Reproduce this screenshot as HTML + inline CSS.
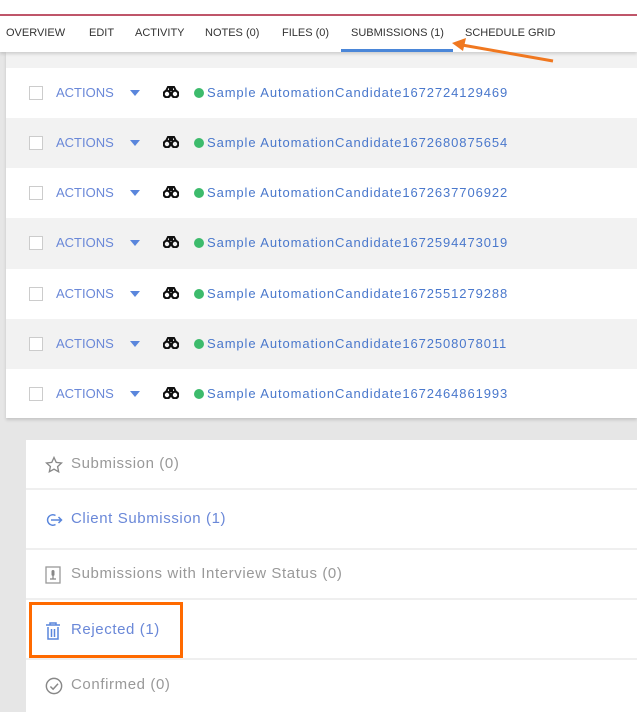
<!DOCTYPE html>
<html><head><style>
*{margin:0;padding:0;box-sizing:border-box}
body{width:637px;height:712px;overflow:hidden;background:#e6e6e6;font-family:"Liberation Sans",sans-serif;position:relative}
.top{position:absolute;left:0;top:0;width:637px;height:16px;background:#fff;border-bottom:2px solid #c0566a}
.tabs{position:absolute;left:0;top:16px;width:637px;height:36px;background:#fff;box-shadow:0 2px 3px rgba(0,0,0,.15);z-index:2}
.tab{position:absolute;top:11px;font-size:11px;color:#333;white-space:nowrap}
.ul{position:absolute;left:341px;top:33px;width:112px;height:3px;background:#4a86d8}
.panel{position:absolute;left:6px;top:52px;width:631px;height:366px;background:#f2f2f2;box-shadow:0 2px 3px rgba(0,0,0,.15)}
.row{position:absolute;left:6px;width:631px;height:50px}
.cb{position:absolute;left:23px;top:18px;width:14px;height:14px;border:1px solid #ccc;background:#fff}
.act{position:absolute;left:50px;top:17px;font-size:13px;color:#6a88d8}
.tri{position:absolute;left:124px;top:22px;width:0;height:0;border-left:5px solid transparent;border-right:5px solid transparent;border-top:6px solid #5a86dc}
.bin{position:absolute;left:157px;top:18px}
.dot{position:absolute;left:188px;top:20px;width:10px;height:10px;border-radius:50%;background:#3dbb6c}
.nm{position:absolute;left:201px;top:17px;font-size:13px;letter-spacing:0.9px;color:#4a78cc;white-space:nowrap}
.p2{position:absolute;left:26px;top:440px;width:611px;height:272px;background:#fff}
.it{position:absolute;left:0;width:611px;border-bottom:2px solid #efefef}
.it span{position:absolute;left:45px;font-size:15px;letter-spacing:0.6px;color:#999;white-space:nowrap}
.it svg{position:absolute;left:19px}
</style></head><body>
<div class="top"></div>
<div class="tabs">
<span class="tab" style="left:6px">OVERVIEW</span>
<span class="tab" style="left:89px">EDIT</span>
<span class="tab" style="left:135px">ACTIVITY</span>
<span class="tab" style="left:205px">NOTES (0)</span>
<span class="tab" style="left:282px">FILES (0)</span>
<span class="tab" style="left:351px">SUBMISSIONS (1)</span>
<span class="tab" style="left:465px">SCHEDULE GRID</span>
<div class="ul"></div>
</div>
<div class="panel"></div>
<div class="row" style="top:68px;background:#fff"><div class="cb"></div><span class="act">ACTIONS</span><div class="tri"></div><svg class="bin" width="16" height="12" viewBox="0 0 16 12"><circle cx="4" cy="8" r="3.3" fill="none" stroke="#111" stroke-width="2.2"/><circle cx="12" cy="8" r="3.3" fill="none" stroke="#111" stroke-width="2.2"/><path d="M3 5 L5 1 H7 V5 M13 5 L11 1 H9 V5 M6 4 H10" stroke="#111" stroke-width="2" fill="none"/></svg><div class="dot"></div><span class="nm">Sample AutomationCandidate1672724129469</span></div>
<div class="row" style="top:118px;background:#f2f2f2"><div class="cb"></div><span class="act">ACTIONS</span><div class="tri"></div><svg class="bin" width="16" height="12" viewBox="0 0 16 12"><circle cx="4" cy="8" r="3.3" fill="none" stroke="#111" stroke-width="2.2"/><circle cx="12" cy="8" r="3.3" fill="none" stroke="#111" stroke-width="2.2"/><path d="M3 5 L5 1 H7 V5 M13 5 L11 1 H9 V5 M6 4 H10" stroke="#111" stroke-width="2" fill="none"/></svg><div class="dot"></div><span class="nm">Sample AutomationCandidate1672680875654</span></div>
<div class="row" style="top:168px;background:#fff"><div class="cb"></div><span class="act">ACTIONS</span><div class="tri"></div><svg class="bin" width="16" height="12" viewBox="0 0 16 12"><circle cx="4" cy="8" r="3.3" fill="none" stroke="#111" stroke-width="2.2"/><circle cx="12" cy="8" r="3.3" fill="none" stroke="#111" stroke-width="2.2"/><path d="M3 5 L5 1 H7 V5 M13 5 L11 1 H9 V5 M6 4 H10" stroke="#111" stroke-width="2" fill="none"/></svg><div class="dot"></div><span class="nm">Sample AutomationCandidate1672637706922</span></div>
<div class="row" style="top:218px;background:#f2f2f2"><div class="cb"></div><span class="act">ACTIONS</span><div class="tri"></div><svg class="bin" width="16" height="12" viewBox="0 0 16 12"><circle cx="4" cy="8" r="3.3" fill="none" stroke="#111" stroke-width="2.2"/><circle cx="12" cy="8" r="3.3" fill="none" stroke="#111" stroke-width="2.2"/><path d="M3 5 L5 1 H7 V5 M13 5 L11 1 H9 V5 M6 4 H10" stroke="#111" stroke-width="2" fill="none"/></svg><div class="dot"></div><span class="nm">Sample AutomationCandidate1672594473019</span></div>
<div class="row" style="top:269px;background:#fff"><div class="cb"></div><span class="act">ACTIONS</span><div class="tri"></div><svg class="bin" width="16" height="12" viewBox="0 0 16 12"><circle cx="4" cy="8" r="3.3" fill="none" stroke="#111" stroke-width="2.2"/><circle cx="12" cy="8" r="3.3" fill="none" stroke="#111" stroke-width="2.2"/><path d="M3 5 L5 1 H7 V5 M13 5 L11 1 H9 V5 M6 4 H10" stroke="#111" stroke-width="2" fill="none"/></svg><div class="dot"></div><span class="nm">Sample AutomationCandidate1672551279288</span></div>
<div class="row" style="top:319px;background:#f2f2f2"><div class="cb"></div><span class="act">ACTIONS</span><div class="tri"></div><svg class="bin" width="16" height="12" viewBox="0 0 16 12"><circle cx="4" cy="8" r="3.3" fill="none" stroke="#111" stroke-width="2.2"/><circle cx="12" cy="8" r="3.3" fill="none" stroke="#111" stroke-width="2.2"/><path d="M3 5 L5 1 H7 V5 M13 5 L11 1 H9 V5 M6 4 H10" stroke="#111" stroke-width="2" fill="none"/></svg><div class="dot"></div><span class="nm">Sample AutomationCandidate1672508078011</span></div>
<div class="row" style="top:369px;background:#fff;height:49px"><div class="cb"></div><span class="act">ACTIONS</span><div class="tri"></div><svg class="bin" width="16" height="12" viewBox="0 0 16 12"><circle cx="4" cy="8" r="3.3" fill="none" stroke="#111" stroke-width="2.2"/><circle cx="12" cy="8" r="3.3" fill="none" stroke="#111" stroke-width="2.2"/><path d="M3 5 L5 1 H7 V5 M13 5 L11 1 H9 V5 M6 4 H10" stroke="#111" stroke-width="2" fill="none"/></svg><div class="dot"></div><span class="nm">Sample AutomationCandidate1672464861993</span></div>

<div class="p2">
<div class="it" style="top:0;height:50px"><svg style="top:16px" width="18" height="18" viewBox="0 0 24 24"><path d="M12 2l3 6.5 7 .8-5.2 4.8 1.4 7L12 17.6 5.8 21l1.4-7L2 9.3l7-.8z" fill="none" stroke="#888" stroke-width="1.8"/></svg><span style="top:15px">Submission (0)</span></div>
<div class="it" style="top:50px;height:60px"><svg style="top:22px" width="18" height="16" viewBox="0 0 24 20"><path d="M14 4A7 7 0 1 0 14 16" fill="none" stroke="#5a86dc" stroke-width="2"/><path d="M8 10H22M18 6l4 4-4 4" fill="none" stroke="#5a86dc" stroke-width="2"/></svg><span style="top:20px;color:#6a88d8">Client Submission (1)</span></div>
<div class="it" style="top:110px;height:50px"><svg style="top:16px" width="16" height="18" viewBox="0 0 16 18"><rect x="1" y="1" width="14" height="16" fill="none" stroke="#999" stroke-width="1.3"/><rect x="6.5" y="4" width="3" height="6" rx="1.5" fill="#888"/><path d="M8 10v3M5 13h6" stroke="#888" stroke-width="1.3"/></svg><span style="top:15px">Submissions with Interview Status (0)</span></div>
<div class="it" style="top:160px;height:60px"><svg style="top:22px" width="16" height="18" viewBox="0 0 16 18"><path d="M1 3H15M5 3V1H11V3M3 5V17H13V5M6.5 7V15M9.5 7V15" fill="none" stroke="#5a86dc" stroke-width="1.5"/></svg><span style="top:21px;color:#6a88d8">Rejected (1)</span></div>
<div class="it" style="top:220px;height:52px;border:none"><svg style="top:17px" width="18" height="18" viewBox="0 0 20 20"><circle cx="10" cy="10" r="8.5" fill="none" stroke="#888" stroke-width="1.6"/><path d="M6 10.5l3 3 5.5-6" fill="none" stroke="#888" stroke-width="1.6"/></svg><span style="top:16px">Confirmed (0)</span></div>
</div>
<div style="position:absolute;left:29px;top:602px;width:154px;height:56px;border:3px solid #ff6a00"></div>
<svg style="position:absolute;left:0;top:0;z-index:5" width="637" height="712"><path d="M553 61L462 45" stroke="#f07820" stroke-width="3"/><path d="M452 43L466 38 463 51z" fill="#f07820"/></svg>
</body></html>
